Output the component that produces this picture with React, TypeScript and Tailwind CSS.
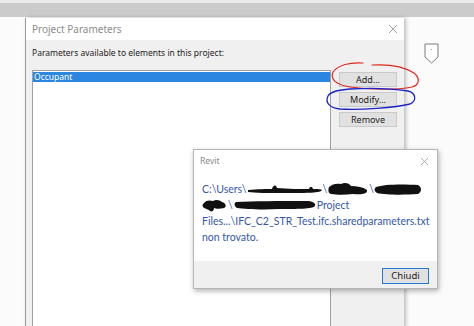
import React from 'react';

const Blob: React.FC<{ w: number; h: number; d: string }> = ({ w, h, d }) => (
  <svg width={w} height={h} viewBox={`0 0 ${w} ${h}`} className="inline-block align-middle">
    <path d={d} fill="#111" />
  </svg>
);

const WinButton: React.FC<{ label: string }> = ({ label }) => (
  <div className="h-[15px] w-[58px] flex items-center justify-center bg-[#e1e1e1] border border-[#c9c9c9] text-[9px] text-[#222]">
    {label}
  </div>
);

const App: React.FC = () => {
  return (
    <div className="relative w-[474px] h-[326px] overflow-hidden bg-[#fbfbfb]" style={{ fontFamily: '"Noto Sans", "Open Sans", sans-serif' }}>
      {/* top toolbar strip */}
      <div className="h-[3px] bg-[#ececec]" />
      <div className="h-[14px] bg-[#cbcbcb]" />

      <div className="flex pt-[1px]">
        {/* Project Parameters dialog */}
        <div className="ml-[25px] w-[379px] h-[310px] flex flex-col border-l border-[#9a9a9a] shadow-[2px_0_4px_rgba(0,0,0,0.25)] bg-[#f0f0f0]">
          <div className="h-[22px] bg-white flex items-center justify-between pl-[6px] pr-[6px]">
            <span className="text-[10px] text-[#8c8c8c]">Project Parameters</span>
            <svg width="10" height="10" viewBox="0 0 10 10">
              <path d="M1 1 L9 9 M9 1 L1 9" stroke="#9a9a9a" strokeWidth="0.9" />
            </svg>
          </div>
          <div className="pl-[6px] pt-[7px] text-[8.5px] text-[#222] leading-[11px]">
            Parameters available to elements in this project:
          </div>
          <div className="flex flex-1 mt-[12px] pl-[6px]">
            <div className="w-[299px] bg-white border border-[#a0a0a0] border-b-0 pt-[1px]">
              <div className="h-[10px] bg-[#2a86e0] text-white text-[8.5px] leading-[10px] pl-[1px]">Occupant</div>
            </div>
            <div className="flex flex-col gap-[5px] ml-[8px] pt-[2px]">
              <WinButton label="Add..." />
              <WinButton label="Modify..." />
              <WinButton label="Remove" />
            </div>
          </div>
        </div>

        {/* side marker icon */}
        <div className="ml-[20px] mt-[25px]">
          <svg width="16" height="21" viewBox="0 0 16 21">
            <path d="M1 1 H14 V14 L7.5 20 L1 14 Z" fill="#fff" stroke="#7a7a7a" strokeWidth="1" />
            <rect x="7" y="6" width="1" height="1" fill="#999" />
          </svg>
        </div>
      </div>

      {/* annotation loops */}
      <svg className="absolute left-0 top-0 pointer-events-none" width="474" height="326" viewBox="0 0 474 326">
        <path
          d="M363 63 C350 62 338 65 333 72 C330 79 336 85 350 87 C372 90 398 90 412 87 C420 85 420 78 414 73 C405 67 390 64 372 65"
          fill="none" stroke="#e0281f" strokeWidth="1.2" strokeLinecap="round"
        />
        <path
          d="M350 89 C370 88 395 89 408 91 C416 93 417 101 410 104 C395 108 360 110 340 109 C329 108 325 102 328 96 C331 91 340 90 350 89"
          fill="none" stroke="#1c22c8" strokeWidth="1.3" strokeLinecap="round"
        />
      </svg>

      {/* Revit message box */}
      <div className="absolute left-[193px] top-[149px] w-[245px] h-[140px] flex flex-col bg-white border border-[#b5b5b5] shadow-[1px_2px_5px_rgba(0,0,0,0.3)]">
        <div className="h-[22px] flex items-center justify-between pl-[6px] pr-[8px]">
          <span className="text-[8.5px] text-[#8a8a8a]">Revit</span>
          <svg width="9" height="9" viewBox="0 0 10 10">
            <path d="M1 1 L9 9 M9 1 L1 9" stroke="#a0a0a0" strokeWidth="0.9" />
          </svg>
        </div>
        <div className="flex-1 pl-[8px] pt-[9px] text-[10.5px] leading-[16px] text-[#3458a8] whitespace-nowrap" style={{ fontFamily: 'Lato, "Noto Sans", sans-serif' }}>
          <div className="flex items-center h-[16px]">
            <span>C:\Users\</span>
            <Blob w={76} h={14} d="M1 8 C10 7 20 7 25 7 C26 3 29 2 30 6 C40 7 55 7 62 7 C63 4 65 4 66 7 C70 7 74 7 75 8 C74 11 60 11 40 11 C20 11 8 11 1 10 Z" />
            <span>\</span>
            <Blob w={42} h={16} d="M2 6 C5 3 10 2 14 3 C18 1 22 2 24 5 C30 5 36 6 40 9 C41 13 34 14 26 13 C18 14 10 14 4 13 C1 12 1 9 2 6 Z" />
            <span>\</span>
            <Blob w={48} h={14} d="M2 5 C10 2 30 2 44 3 C48 5 48 10 44 12 C30 13 12 13 3 11 C0 9 0 7 2 5 Z" />
          </div>
          <div className="flex items-center h-[16px]">
            <Blob w={26} h={16} d="M2 6 C4 3 8 3 11 4 C14 2 18 3 20 5 C24 6 25 10 22 11 C18 12 14 12 12 11 C12 14 10 15 8 14 C6 12 4 12 2 11 C0 9 0 8 2 6 Z" />
            <span>\</span>
            <Blob w={84} h={14} d="M3 4 C20 3 46 3 72 3 C80 3 83 5 82 8 C80 11 64 11 46 11 C28 12 12 11 4 10 C1 8 1 5 3 4 Z" />
            <span>Project</span>
          </div>
          <div>Files...\IFC_C2_STR_Test.ifc.sharedparameters.txt</div>
          <div>non trovato.</div>
        </div>
        <div className="h-[27px] bg-[#f0f0f0] flex items-end justify-end pr-[8px] pb-[4px]">
          <div className="h-[16px] w-[47px] flex items-center justify-center bg-[#e1e1e1] border border-[#1e7ad6] text-[9.5px] text-[#222]">
            Chiudi
          </div>
        </div>
      </div>
    </div>
  );
};

export default App;
